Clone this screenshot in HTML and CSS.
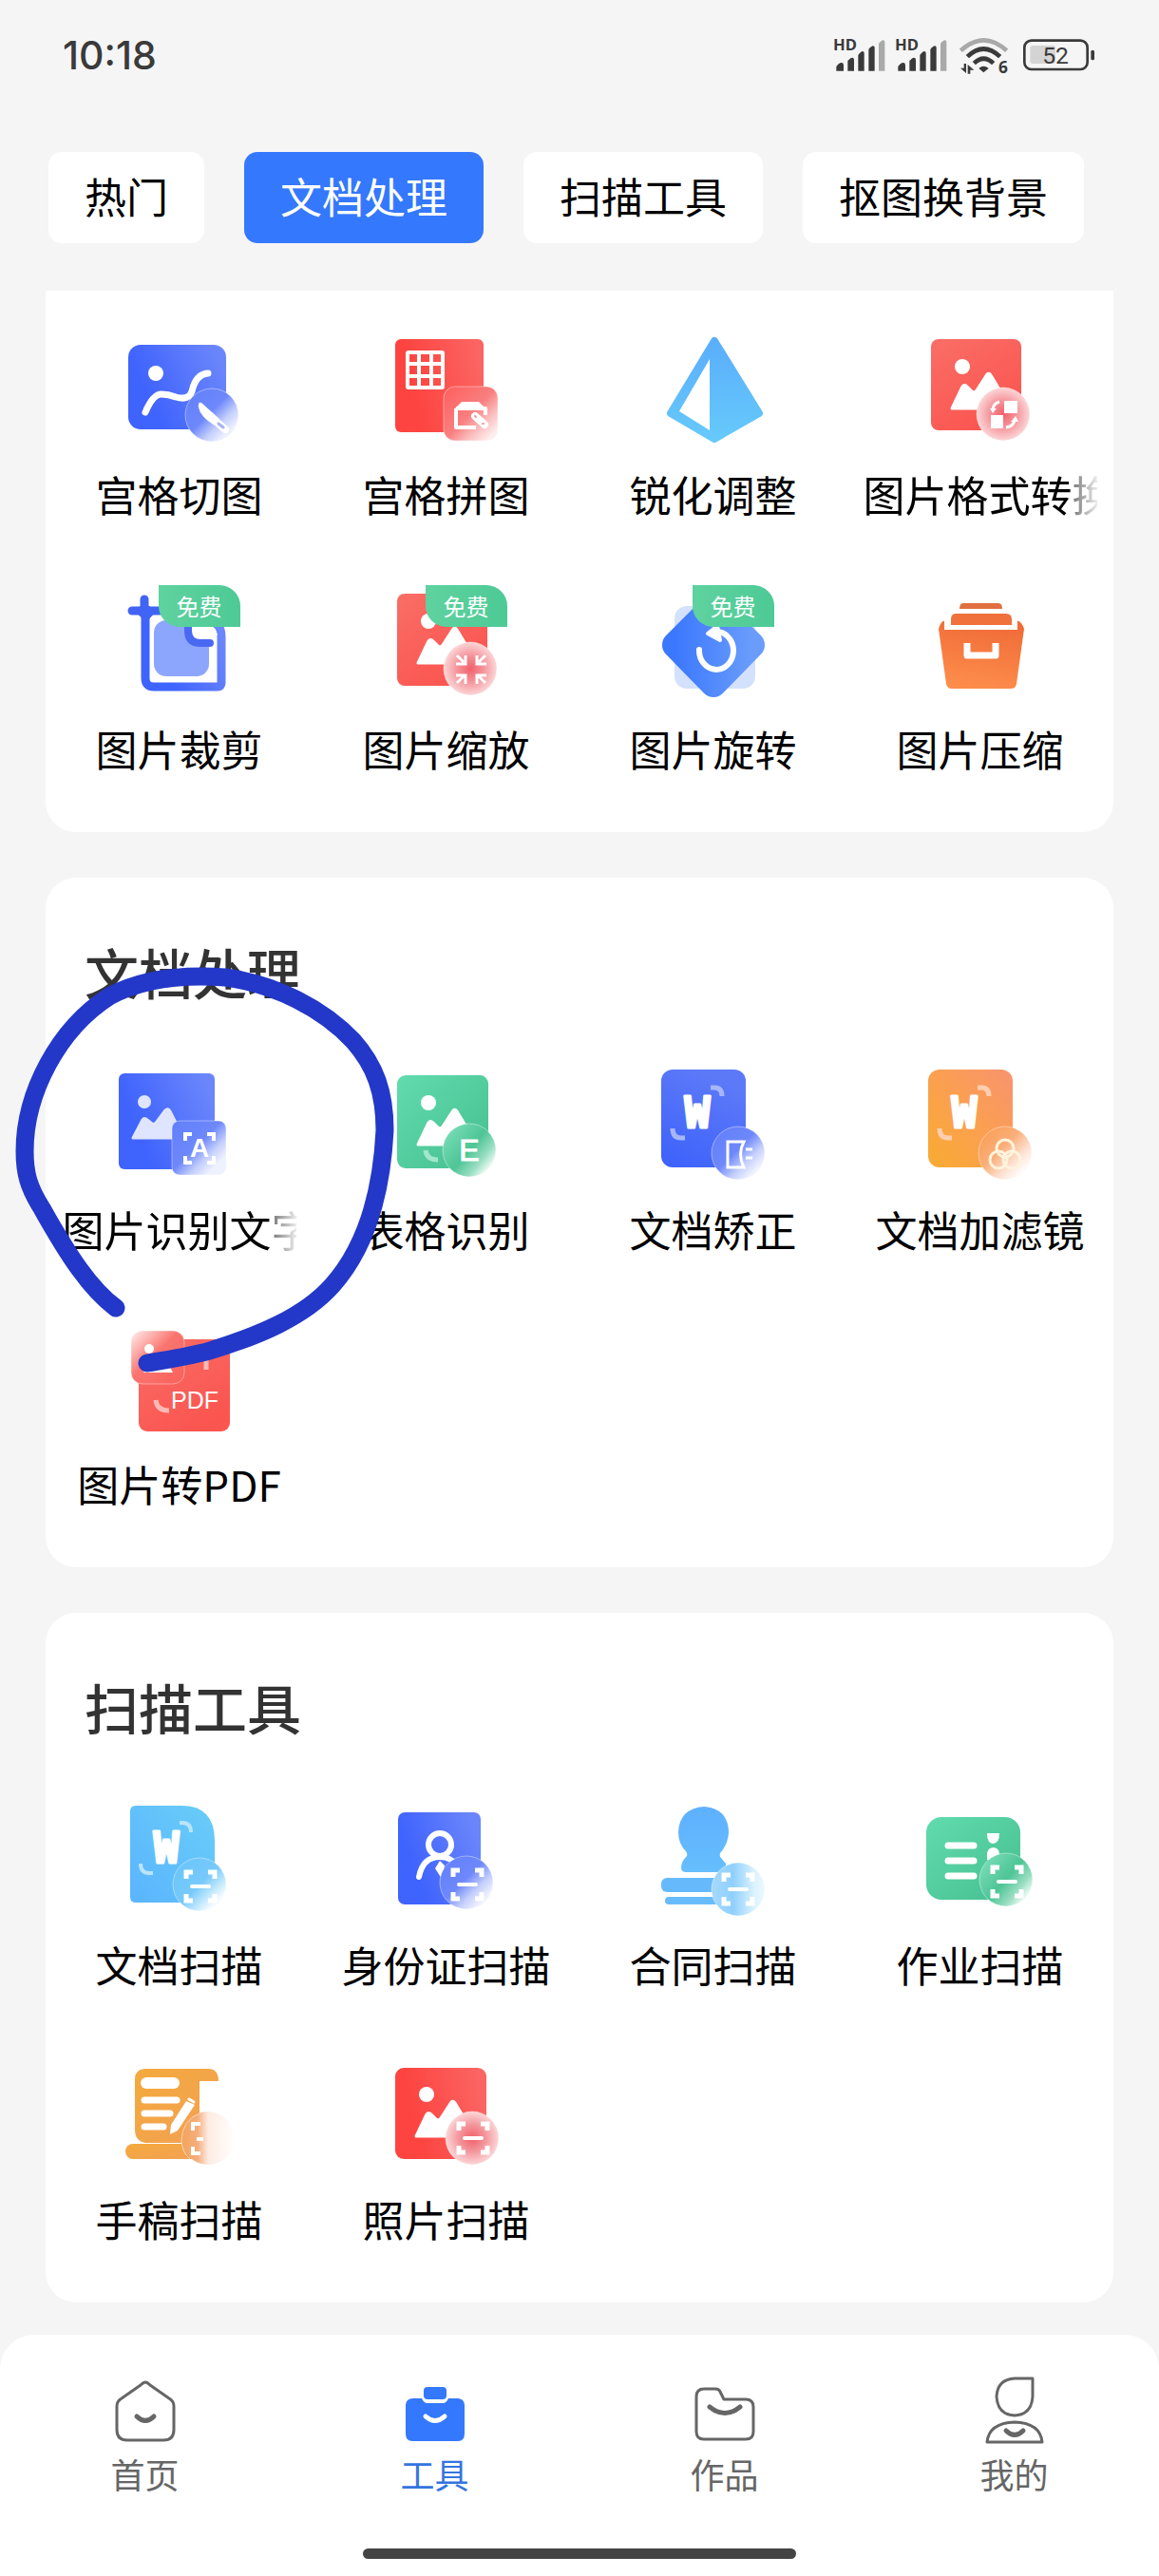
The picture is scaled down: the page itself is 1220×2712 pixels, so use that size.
FILE: index.html
```html
<!DOCTYPE html>
<html lang="zh-CN">
<head>
    <meta charset="UTF-8">
    <meta name="viewport" content="width=device-width, initial-scale=1.0">
    <title>工具</title>
    <link rel="stylesheet" href="styles.css">
</head>
<body>

<!-- shared gradients and shapes -->
<svg class="defs" aria-hidden="true">
    <defs>
        <linearGradient id="blue" x1="0" y1="0.7" x2="1" y2="0.3"><stop offset="0.2" stop-color="#3f63fd"/><stop offset="1" stop-color="#6b86fb"/></linearGradient>
        <linearGradient id="blue-down" x1="0" y1="1" x2="0.4" y2="0"><stop offset="0" stop-color="#3c61fb"/><stop offset="1" stop-color="#5c79f8"/></linearGradient>
        <linearGradient id="azure" x1="0" y1="0" x2="1" y2="0"><stop offset="0" stop-color="#3c78fd"/><stop offset="1" stop-color="#699cfb"/></linearGradient>
        <linearGradient id="red" x1="0" y1="0.6" x2="1" y2="0.4"><stop offset="0.2" stop-color="#fd4440"/><stop offset="1" stop-color="#fb6563"/></linearGradient>
        <linearGradient id="coral" x1="0" y1="0" x2="0.6" y2="1"><stop offset="0" stop-color="#f96e66"/><stop offset="1" stop-color="#fb5550"/></linearGradient>
        <linearGradient id="green" x1="0" y1="0" x2="1" y2="1"><stop offset="0" stop-color="#61dcae"/><stop offset="1" stop-color="#46be8f"/></linearGradient>
        <linearGradient id="orange" x1="0" y1="1" x2="1" y2="0"><stop offset="0" stop-color="#f8ab31"/><stop offset="0.5" stop-color="#fba050"/><stop offset="1" stop-color="#f8936e"/></linearGradient>
        <linearGradient id="amber" x1="0" y1="0" x2="1" y2="1"><stop offset="0" stop-color="#f4aa3c"/><stop offset="1" stop-color="#f2a055"/></linearGradient>
        <linearGradient id="bucket" x1="0.6" y1="0" x2="0.4" y2="1"><stop offset="0" stop-color="#f06b38"/><stop offset="1" stop-color="#fd8d4b"/></linearGradient>
        <linearGradient id="cyan" x1="0" y1="1" x2="1" y2="0"><stop offset="0" stop-color="#5bb4fe"/><stop offset="1" stop-color="#68cdf8"/></linearGradient>
        <linearGradient id="prism" x1="0" y1="0" x2="0" y2="1"><stop offset="0" stop-color="#5aaefc"/><stop offset="1" stop-color="#66c9fb"/></linearGradient>
        <linearGradient id="stamp" x1="0" y1="0" x2="0" y2="1"><stop offset="0" stop-color="#5eb0fe"/><stop offset="1" stop-color="#66befd"/></linearGradient>

        <linearGradient id="glass-blue" x1="0.1" y1="0.1" x2="0.9" y2="0.9"><stop offset="0" stop-color="#6481fb"/><stop offset="0.45" stop-color="#6e88fb"/><stop offset="0.7" stop-color="#c4cffc"/><stop offset="0.9" stop-color="#eef1fe"/></linearGradient>
        <linearGradient id="glass-red" x1="0.1" y1="0.1" x2="0.9" y2="0.9"><stop offset="0" stop-color="#fd6563"/><stop offset="0.5" stop-color="#f97f80"/><stop offset="0.75" stop-color="#fbbcbd"/><stop offset="1" stop-color="#feeeee"/></linearGradient>
        <radialGradient id="glass-rose" cx="0.5" cy="0.5" r="0.5"><stop offset="0" stop-color="#f1606b"/><stop offset="0.5" stop-color="#f4959c"/><stop offset="1" stop-color="#fcd6d7"/></radialGradient>
        <linearGradient id="glass-corner" x1="1" y1="1" x2="0" y2="0"><stop offset="0" stop-color="#fb5f5a"/><stop offset="0.55" stop-color="#fa7570"/><stop offset="1" stop-color="#fff1f0"/></linearGradient>
        <linearGradient id="glass-green" x1="0.1" y1="0.2" x2="0.95" y2="0.9"><stop offset="0" stop-color="#74dab3"/><stop offset="0.45" stop-color="#4ec596"/><stop offset="0.72" stop-color="#99dec2"/><stop offset="0.9" stop-color="#eafaf3"/></linearGradient>
        <linearGradient id="glass-orange" x1="0.1" y1="0.1" x2="0.9" y2="0.9"><stop offset="0" stop-color="#fb9f58"/><stop offset="0.4" stop-color="#faae78"/><stop offset="0.7" stop-color="#fde0d0"/><stop offset="0.9" stop-color="#fffaf7"/></linearGradient>
        <linearGradient id="glass-cyan" x1="0.1" y1="0.1" x2="0.9" y2="0.9"><stop offset="0" stop-color="#69c6fb"/><stop offset="0.5" stop-color="#78c9fb"/><stop offset="0.75" stop-color="#c5eafd"/><stop offset="0.9" stop-color="#f3fbff"/></linearGradient>
        <linearGradient id="glass-ice" x1="0" y1="0.5" x2="1" y2="0.5"><stop offset="0" stop-color="#a5d9fd"/><stop offset="0.4" stop-color="#8fd0fd"/><stop offset="0.8" stop-color="#dbf2fd"/><stop offset="1" stop-color="#edf9fe"/></linearGradient>
        <linearGradient id="glass-fade" x1="0" y1="0.5" x2="1" y2="0.5"><stop offset="0" stop-color="#f2a45c"/><stop offset="0.3" stop-color="#f5ae7c"/><stop offset="0.5" stop-color="#fdebe2"/><stop offset="1" stop-color="#ffffff"/></linearGradient>
    </defs>

    <symbol id="photo" viewBox="0 0 144 144">
        <circle cx="53" cy="46" r="8" fill="#fff"/>
        <path d="M42 90 L53 67 Q55 64 58 67 L63 72 Q66 74 68 71 L79 54 Q81 52 83 55 L104 90 Z" fill="#fff" stroke="#fff" stroke-width="3" stroke-linejoin="round"/>
    </symbol>
    <!-- scan frame -->
    <symbol id="scan" viewBox="0 0 36 36">
        <path d="M3 10 V3 H10 M26 3 H33 V10 M33 26 V33 H26 M10 33 H3 V26" fill="none" stroke="#fff" stroke-width="5"/>
        <path d="M9 18 H27" stroke="#fff" stroke-width="4" stroke-linecap="round"/>
    </symbol>
</svg>

<header class="status-bar">
    <span class="time">10:18</span>
    <svg class="status-icons" viewBox="80 50 834 126" aria-label="信号 WiFi 电量 52">
        <g id="signal">
            <text x="83" y="99" class="hd">HD</text>
            <g fill="#3a3a3a">
                <path d="M93 163 V149 Q100 139 107 137 Q116 136 116 144 V163 Z"/>
                <path d="M129 163 V131 Q138 121 143 121 Q149 121 149 127 V163 Z"/>
                <path d="M162 163 V113 Q171 101 176 101 Q181 101 181 107 V163 Z"/>
                <path d="M195 163 V95 Q204 84 209 84 Q214 84 214 90 V163 Z"/>
            </g>
            <path d="M227 163 V77 Q236 66 241 66 Q246 66 246 72 V163 Z" fill="#a9a9a9"/>
        </g>
        <use href="#signal" x="195"/>
        <g fill="none" stroke="#3a3a3a" stroke-width="14">
            <path d="M486 99 Q558 33 631 99" stroke="#a9a9a9"/>
            <path d="M507 118 Q558 69 610 118"/>
            <path d="M528 139 Q558 109 589 139"/>
        </g>
        <path d="M543 155 Q558 141 574 155 L558 168 Z" fill="#3a3a3a"/>
        <path d="M485 154 L503 170 V140 H496 V154 Z M508 172 V143 L528 160 H516 V172 Z" fill="#3a3a3a"/>
        <text x="605" y="170" class="wifi-gen">6</text>
        <rect x="705" y="83" width="80" height="57" rx="8" fill="#d4d4d4"/>
        <rect x="687" y="67" width="199" height="91" rx="22" fill="none" stroke="#3a3a3a" stroke-width="8"/>
        <rect x="897" y="97" width="11" height="32" rx="5" fill="#3a3a3a"/>
        <text x="785" y="139" class="battery">52</text>
    </svg>
</header>

<nav class="chips">
    <button type="button" class="chip">热门</button>
    <button type="button" class="chip chip-active">文档处理</button>
    <button type="button" class="chip">扫描工具</button>
    <button type="button" class="chip">抠图换背景</button>
</nav>

<main class="sections">
    <section class="card card-cut">
        <div class="tools">
            <a href="#" class="tool">
                <svg class="tool-icon" viewBox="0 0 144 144">
                    <rect x="18" y="23" width="103" height="89" rx="13" fill="url(#blue)"/>
                    <circle cx="47" cy="53" r="8" fill="#fff"/>
                    <path d="M36 94 Q44 75 53 75 Q60 75 68 78 Q82 82 85 72 Q89 54 102 53" fill="none" stroke="#fff" stroke-width="7" stroke-linecap="round"/>
                    <circle cx="106" cy="97" r="28" fill="url(#glass-blue)" class="glass"/>
                    <path d="M95 84 L114 101 L109 108 Q94 99 92 89 Q91 83 95 84 Z" fill="#fff"/>
                    <path d="M112 105 L120 112" stroke="#fff" stroke-width="8" stroke-linecap="round"/>
                    <path d="M113 106 L118 110" stroke="#a6b4ee" stroke-width="3" stroke-linecap="round"/>
                </svg>
                <span class="tool-name">宫格切图</span>
            </a>
            <a href="#" class="tool">
                <svg class="tool-icon" viewBox="0 0 144 144">
                    <rect x="18" y="17" width="93" height="98" rx="6" fill="url(#red)"/>
                    <rect x="31" y="31" width="37" height="37" rx="1" fill="none" stroke="#fff" stroke-width="4"/>
                    <path d="M43 31 V68 M56 31 V68 M31 43 H68 M31 56 H68" stroke="#fff" stroke-width="4"/>
                    <rect x="69" y="67" width="57" height="57" rx="12" fill="url(#glass-red)" class="glass"/>
                    <path d="M82 90 H113 V97 M103 110 H82 V90" fill="none" stroke="#fff" stroke-width="4" stroke-linejoin="round"/>
                    <path d="M81 90 L88 83 H106 L113 90 Z" fill="#fff"/>
                    <path d="M102 98 L112 107" stroke="#fff" stroke-width="8" stroke-linecap="round"/>
                    <path d="M102 98 L103 99 M110 106 L111 106" stroke="#f39a9b" stroke-width="2" stroke-linecap="round"/>
                </svg>
                <span class="tool-name">宫格拼图</span>
            </a>
            <a href="#" class="tool">
                <svg class="tool-icon" viewBox="0 0 144 144">
                    <path d="M73 19 L120 95 L73 122 L27 95 Z" fill="url(#prism)" stroke="url(#prism)" stroke-width="8" stroke-linejoin="round"/>
                    <path d="M68 38 V113 L36 93 Z" fill="#fff"/>
                </svg>
                <span class="tool-name">锐化调整</span>
            </a>
            <a href="#" class="tool">
                <svg class="tool-icon" viewBox="0 0 144 144">
                    <rect x="20" y="17" width="95" height="96" rx="8" fill="url(#coral)"/>
                    <use href="#photo"/>
                    <circle cx="96" cy="96" r="28" fill="url(#glass-rose)" class="glass"/>
                    <path d="M97 82 h14 v13 h-14 Z M83 97 h13 v14 h-13 Z" fill="#fff"/>
                    <path d="M85 92 Q85 85 92 83 M99 110 Q107 109 108 102" fill="none" stroke="#fff" stroke-width="3"/>
                    <path d="M82 90 h7 l-4 5 Z M104 104 l5 -6 l3 6 Z" fill="#fff"/>
                </svg>
                <span class="tool-name tool-name-long">图片格式转换</span>
            </a>
            <a href="#" class="tool">
                <svg class="tool-icon" viewBox="0 0 144 144">
                    <rect x="45" y="45" width="58" height="59" rx="13" fill="#8ca6fd"/>
                    <path d="M36 35 V106 Q36 115 45 115 H112 Q116 115 116 111 V62 Q116 46 100 46" fill="none" stroke="url(#blue)" stroke-width="9"/>
                    <path d="M35 23 V35 H22 M35 35 H60" fill="none" stroke="#4264f5" stroke-width="9" stroke-linecap="round" stroke-linejoin="round"/>
                    <path d="M24 35 L35 27 L48 35 L37 47 Z" fill="#4264f5"/>
                    <path d="M103 46 H84 V58 Q84 69 96 69 H104 L112 60 Z" fill="#fff"/>
                    <path d="M81 46 V56 Q81 69 94 69 H104" fill="none" stroke="#4a69f2" stroke-width="8" stroke-linecap="round"/>
                </svg>
                <span class="free">免费</span>
                <span class="tool-name">图片裁剪</span>
            </a>
            <a href="#" class="tool">
                <svg class="tool-icon" viewBox="0 0 144 144">
                    <rect x="20" y="17" width="95" height="97" rx="8" fill="url(#coral)"/>
                    <use href="#photo"/>
                    <circle cx="97" cy="96" r="28" fill="url(#glass-rose)" class="glass"/>
                    <path d="M83 82 L90 89 M82 91 H92 V82 M113 82 L106 89 M104 82 V91 H114 M83 111 L90 104 M82 103 H92 V112 M113 111 L106 104 M104 112 V103 H114" fill="none" stroke="#fff" stroke-width="3"/>
                </svg>
                <span class="free">免费</span>
                <span class="tool-name">图片缩放</span>
            </a>
            <a href="#" class="tool">
                <svg class="tool-icon" viewBox="0 0 144 144">
                    <rect x="31" y="30" width="85" height="87" rx="13" fill="#d3e1fc"/>
                    <path d="M72 31 L112 71 L72 112 L32 71 Z" fill="url(#azure)" stroke="url(#azure)" stroke-width="28" stroke-linejoin="round"/>
                    <path d="M57 76 A18 20 0 1 0 77 57" fill="none" stroke="#fff" stroke-width="6" stroke-linecap="round"/>
                    <path d="M66 59 L76 51 L79 66 Z" fill="#fff" stroke="#fff" stroke-width="4" stroke-linejoin="round"/>
                </svg>
                <span class="free">免费</span>
                <span class="tool-name">图片旋转</span>
            </a>
            <a href="#" class="tool">
                <svg class="tool-icon" viewBox="0 0 144 144">
                    <path d="M54 27 H91 Q95 27 95 33 H50 Q50 27 54 27 Z" fill="#e0703f"/>
                    <path d="M28 54 Q30 46 35 45 H110 Q116 47 118 54 L110 112 Q109 117 104 117 H42 Q37 117 36 112 Z" fill="url(#bucket)"/>
                    <path d="M34 44 H111 V55 H34 Z" fill="#fff"/>
                    <path d="M46 38 H99 Q105 38 105 44 V50 H41 V44 Q41 38 46 38 Z" fill="#f1713c"/>
                    <path d="M58 69 V82 H88 V69" fill="none" stroke="#fff" stroke-width="7" stroke-linejoin="round"/>
                </svg>
                <span class="tool-name">图片压缩</span>
            </a>
        </div>
    </section>

    <section class="card">
        <h2 class="card-title">文档处理</h2>
        <div class="tools">
            <a href="#" class="tool">
                <svg class="tool-icon" viewBox="0 0 144 144">
                    <rect x="8" y="16" width="101" height="101" rx="6" fill="url(#blue)"/>
                    <circle cx="35" cy="46" r="7" fill="#dfe5fe"/>
                    <path d="M23 84 L33 65 Q35 62 38 65 L43 69 Q46 70 48 67 L57 55 Q60 52 62 56 L76 84 Z" fill="#dfe5fe" stroke="#dfe5fe" stroke-width="3" stroke-linejoin="round"/>
                    <rect x="64" y="66" width="57" height="57" rx="8" fill="url(#glass-blue)" class="glass"/>
                    <path d="M78 87 V80 H85 M101 80 H108 V87 M108 103 V110 H101 M85 110 H78 V103" fill="none" stroke="#fff" stroke-width="4"/>
                    <text x="93" y="104" class="mark mark-a">A</text>
                </svg>
                <span class="tool-name tool-name-long">图片识别文字</span>
            </a>
            <a href="#" class="tool">
                <svg class="tool-icon" viewBox="0 0 144 144">
                    <rect x="20" y="18" width="96" height="98" rx="9" fill="url(#green)"/>
                    <use href="#photo" y="1"/>
                    <path d="M50 97 Q51 107 63 107" fill="none" stroke="#a3e6cc" stroke-width="5"/>
                    <circle cx="96" cy="97" r="28" fill="url(#glass-green)" class="glass"/>
                    <text x="96" y="108" class="mark mark-e">E</text>
                </svg>
                <span class="tool-name">表格识别</span>
            </a>
            <a href="#" class="tool">
                <svg class="tool-icon" viewBox="0 0 144 144">
                    <rect x="17" y="12" width="89" height="103" rx="12" fill="url(#blue-down)"/>
                    <path d="M69 31 H73 Q81 31 81 40 M29 74 Q29 84 38 84 H42" fill="none" stroke="#a7b6fb" stroke-width="5"/>
                    <text x="55" y="73" class="mark mark-w">W</text>
                    <circle cx="98" cy="100" r="28" fill="url(#glass-blue)" class="glass"/>
                    <path d="M87 88 H104 Q97 101 104 115 H87 Z" fill="none" stroke="#fff" stroke-width="3"/>
                    <path d="M106 96 H113 M106 105 H113" stroke="#fff" stroke-width="3"/>
                </svg>
                <span class="tool-name">文档矫正</span>
            </a>
            <a href="#" class="tool">
                <svg class="tool-icon" viewBox="0 0 144 144">
                    <rect x="17" y="12" width="89" height="103" rx="12" fill="url(#orange)"/>
                    <path d="M69 31 H73 Q81 31 81 40 M29 74 Q29 84 38 84 H42" fill="none" stroke="#fdcfae" stroke-width="5"/>
                    <text x="55" y="73" class="mark mark-w">W</text>
                    <circle cx="98" cy="100" r="28" fill="url(#glass-orange)" class="glass"/>
                    <g fill="none" stroke="#fff3dc" stroke-width="3">
                        <circle cx="98" cy="95" r="9"/>
                        <circle cx="91" cy="107" r="9"/>
                        <circle cx="105" cy="107" r="9"/>
                    </g>
                </svg>
                <span class="tool-name">文档加滤镜</span>
            </a>
            <a href="#" class="tool">
                <svg class="tool-icon" viewBox="0 0 144 144">
                    <rect x="29" y="28" width="96" height="97" rx="9" fill="url(#coral)"/>
                    <path d="M100 46 V60 M47 92 Q48 103 61 103" fill="none" stroke="#fdb9b5" stroke-width="5"/>
                    <rect x="21" y="19" width="56" height="56" rx="12" fill="url(#glass-corner)" class="glass"/>
                    <circle cx="40" cy="38" r="5" fill="#fff"/>
                    <path d="M34 63 L41 52 L48 56 L56 46 L65 63 Z" fill="#fff"/>
                    <text x="88" y="101" class="mark mark-pdf">PDF</text>
                </svg>
                <span class="tool-name">图片转PDF</span>
            </a>
        </div>
        <!-- hand-drawn ring round 图片识别文字 -->
        <svg class="ring" viewBox="12 1014 420 440" aria-hidden="true">
            <path d="M122 1377 C95 1357 72 1322 44 1272 C30 1250 26 1235 26 1212 C26 1150 62 1083 115 1049 C150 1030 195 1026 237 1029 C290 1036 340 1062 372 1096 C395 1122 405 1150 405 1190 C402 1250 388 1310 350 1353 C320 1387 270 1407 221 1422 C200 1428 178 1431 155 1435"/>
        </svg>
    </section>

    <section class="card">
        <h2 class="card-title">扫描工具</h2>
        <div class="tools">
            <a href="#" class="tool">
                <svg class="tool-icon" viewBox="0 0 144 144">
                    <path d="M26 13 H74 Q109 13 109 50 V115 H26 Q20 115 20 109 V19 Q20 13 26 13 Z" fill="url(#cyan)"/>
                    <path d="M72 31 H75 Q84 31 84 41 M31 74 Q31 84 40 84 H44" fill="none" stroke="#b9e4fd" stroke-width="4"/>
                    <text x="58" y="73" class="mark mark-w">W</text>
                    <circle cx="93" cy="96" r="28" fill="url(#glass-cyan)" class="glass"/>
                    <use href="#scan" x="76" y="80" width="36" height="36"/>
                </svg>
                <span class="tool-name">文档扫描</span>
            </a>
            <a href="#" class="tool">
                <svg class="tool-icon" viewBox="0 0 144 144">
                    <rect x="21" y="20" width="87" height="97" rx="7" fill="url(#blue)"/>
                    <circle cx="65" cy="54" r="12" fill="none" stroke="#fff" stroke-width="6"/>
                    <path d="M43 88 Q47 67 65 67 Q78 67 84 78" fill="none" stroke="#fff" stroke-width="6" stroke-linecap="round"/>
                    <path d="M65 71 L70 76 L67 90 L60 79 Z" fill="#fff"/>
                    <circle cx="93" cy="94" r="28" fill="url(#glass-blue)" class="glass"/>
                    <use href="#scan" x="76" y="78" width="36" height="36"/>
                </svg>
                <span class="tool-name">身份证扫描</span>
            </a>
            <a href="#" class="tool">
                <svg class="tool-icon" viewBox="0 0 144 144">
                    <path d="M62 14 Q88 16 88 42 Q87 54 79 63 Q78 66 80 68 L85 74 V83 H43 Q38 83 38 78 Q38 72 44 66 Q45 64 43 61 Q35 53 35 41 Q36 16 62 14 Z" fill="url(#stamp)"/>
                    <rect x="17" y="89" width="92" height="15" rx="6" fill="#66bafc"/>
                    <rect x="21" y="109" width="84" height="8" rx="4" fill="#68bcfb"/>
                    <circle cx="98" cy="101" r="28" fill="url(#glass-ice)" class="glass"/>
                    <use href="#scan" x="80" y="83" width="36" height="36"/>
                </svg>
                <span class="tool-name">合同扫描</span>
            </a>
            <a href="#" class="tool">
                <svg class="tool-icon" viewBox="0 0 144 144">
                    <rect x="15" y="25" width="99" height="87" rx="16" fill="url(#green)"/>
                    <path d="M38 55 H65 M38 71 H65 M38 87 H65" stroke="#fff" stroke-width="7" stroke-linecap="round"/>
                    <path d="M79 42 H92 Q92 53 85 53 Q79 53 79 42 Z M79 70 V63 Q80 57 86 57 Q92 58 92 64 V70 Z" fill="#fff"/>
                    <circle cx="99" cy="91" r="28" fill="url(#glass-green)" class="glass"/>
                    <use href="#scan" x="82" y="75" width="36" height="36"/>
                </svg>
                <span class="tool-name">作业扫描</span>
            </a>
            <a href="#" class="tool">
                <svg class="tool-icon" viewBox="0 0 144 144">
                    <path d="M35 22 H102 Q113 22 113 35 H93 V100 H36 Q25 98 25 86 V33 Q25 23 35 22 Z" fill="url(#amber)"/>
                    <rect x="15" y="101" width="84" height="16" rx="8" fill="url(#amber)"/>
                    <path d="M37 37 H66" stroke="#fff" stroke-width="12" stroke-linecap="round"/>
                    <path d="M35 55 H69 M35 69 H62 M35 83 H55" stroke="#fff" stroke-width="7" stroke-linecap="round"/>
                    <path d="M79 56 L88 60 L70 87 L62 91 L63 81 Z" fill="#fff"/>
                    <path d="M82 54 L87 57" stroke="#fff" stroke-width="3" stroke-linecap="round"/>
                    <circle cx="102" cy="95" r="28" fill="url(#glass-fade)"/>
                    <path d="M93 69 Q75 76 74 97 Q75 111 83 117" fill="none" stroke="#fbd2ae" stroke-width="1"/>
                    <path d="M86 87 V80 H94 M94 111 H86 V104 M90 96 H97" fill="none" stroke="#fff" stroke-width="4"/>
                </svg>
                <span class="tool-name">手稿扫描</span>
            </a>
            <a href="#" class="tool">
                <svg class="tool-icon" viewBox="0 0 144 144">
                    <rect x="18" y="21" width="96" height="96" rx="9" fill="url(#red)"/>
                    <use href="#photo" x="-2" y="3"/>
                    <circle cx="99" cy="95" r="28" fill="url(#glass-rose)" class="glass"/>
                    <use href="#scan" x="82" y="77" width="36" height="36"/>
                </svg>
                <span class="tool-name">照片扫描</span>
            </a>
        </div>
    </section>
</main>

<footer class="bottom">
    <nav class="tabs">
        <a href="#" class="tab">
            <svg class="tab-icon" viewBox="0 0 72 72">
                <path d="M36 6 Q38 6 41 9 L61 23 Q66 26 66 31 V56 Q66 67 55 67 H17 Q6 67 6 56 V31 Q6 26 11 23 L31 9 Q34 6 36 6 Z" class="line"/>
                <path d="M27 42 Q36 51 45 42" class="smile"/>
            </svg>
            <span>首页</span>
        </a>
        <a href="#" class="tab tab-active">
            <svg class="tab-icon" viewBox="0 0 72 72">
                <rect x="24" y="11" width="24" height="13" rx="4" fill="#3478fd"/>
                <path d="M12 23 H22 Q24 28 28 28 H44 Q48 28 50 23 H60 Q67 24 67 30 V60 Q67 68 60 68 H12 Q5 68 5 60 V30 Q5 24 12 23 Z" fill="#3478fd"/>
                <path d="M26 42 Q36 51 46 42" fill="none" stroke="#fff" stroke-width="5" stroke-linecap="round"/>
            </svg>
            <span>工具</span>
        </a>
        <a href="#" class="tab">
            <svg class="tab-icon" viewBox="0 0 72 72">
                <path d="M14 13 H26 Q30 13 31 16 L35 24 H58 Q66 24 66 32 V58 Q66 66 58 66 H14 Q6 66 6 58 V21 Q6 13 14 13 Z" class="line"/>
                <path d="M20 32 Q36 45 52 32" class="smile"/>
            </svg>
            <span>作品</span>
        </a>
        <a href="#" class="tab">
            <svg class="tab-icon" viewBox="0 0 72 72">
                <path d="M36 2 H55 V21 Q54 40 36 41 Q18 40 17 21 Q18 3 36 2 Z" class="line"/>
                <path d="M7 69 Q9 49 36 48 Q63 49 65 69 Z" class="line"/>
                <path d="M27 57 Q36 66 45 57" class="smile"/>
            </svg>
            <span>我的</span>
        </a>
    </nav>
    <div class="home-indicator"></div>
</footer>

</body>
</html>
```

FILE: styles.css
```css
* {
    box-sizing: border-box;
}
body {
    margin: 0;
    min-height: 100vh;
    display: flex;
    flex-direction: column;
    font-family: "Noto Sans CJK SC", sans-serif;
    background: #f5f5f5;
    color: #000;
}
a {
    color: inherit;
    text-decoration: none;
}
.defs {
    position: absolute;
    width: 0;
    height: 0;
}

/* status bar */
.status-bar {
    display: flex;
    align-items: center;
    justify-content: space-between;
    height: 116px;
    padding: 0 66px;
    color: #3a3a3a;
}
.time {
    font-family: Inter, sans-serif;
    font-size: 41px;
    font-weight: 500;
}
.status-icons {
    width: 278px;
    height: 42px;
    overflow: visible;
}
.hd {
    font: 700 50px "Noto Sans", sans-serif;
    fill: #3a3a3a;
}
.wifi-gen {
    font: 700 52px "Noto Sans", sans-serif;
    fill: #3a3a3a;
}
.battery {
    font: 400 74px Roboto, sans-serif;
    fill: #3a3a3a;
    text-anchor: middle;
}

/* category chips */
.chips {
    display: flex;
    gap: 42px;
    padding: 44px 51px 50px;
}
.chip {
    height: 96px;
    padding: 0 38px 4px;
    border: none;
    border-radius: 14px;
    background: #fff;
    color: #000;
    font-family: inherit;
    font-size: 44px;
    line-height: 64px;
    white-space: nowrap;
    cursor: pointer;
}
.chip-active {
    background: #3478fd;
    color: #fff;
}

/* tool cards */
.sections {
    flex: 1;
    display: flex;
    flex-direction: column;
    gap: 48px;
    padding: 0 48px 34px;
}
.card {
    position: relative;
    padding: 62px 0 56px;
    border-radius: 32px;
    background: #fff;
}
.card-cut {
    padding-top: 34px;
    border-radius: 0 0 32px 32px;
}
.card-title {
    margin: 0 0 56px;
    padding: 0 41px;
    font-size: 57px;
    font-weight: 500;
    line-height: 72px;
    color: #333;
}
.tools {
    display: grid;
    grid-template-columns: repeat(4, 1fr);
    row-gap: 56px;
}
.tool {
    position: relative;
    display: flex;
    flex-direction: column;
    align-items: center;
    gap: 4px;
    min-width: 0;
}
.tool-icon {
    width: 144px;
    height: 144px;
}
.tool-name {
    max-width: 246px;
    overflow: hidden;
    font-size: 44px;
    line-height: 64px;
    white-space: nowrap;
}
.tool-name-long {
    -webkit-mask-image: linear-gradient(to right, #000 216px, rgba(0, 0, 0, 0.5) 222px, transparent 250px);
    mask-image: linear-gradient(to right, #000 216px, rgba(0, 0, 0, 0.5) 222px, transparent 250px);
}
.free {
    position: absolute;
    top: 8px;
    left: 50%;
    width: 86px;
    margin-left: -22px;
    border-radius: 0 22px 0 22px;
    background: linear-gradient(to right, #5fd29f, #4dca96);
    color: #fff;
    font-size: 24px;
    line-height: 44px;
    text-align: center;
}

/* round and square badges over the icons */
.glass {
    stroke: #fff;
    stroke-opacity: 0.4;
    stroke-width: 1;
}

/* letters inside the icons */
.mark {
    fill: #fff;
    text-anchor: middle;
}
.mark-w {
    font: 700 44px "DejaVu Sans Mono", monospace;
    stroke: #fff;
    stroke-width: 3;
    stroke-linejoin: round;
}
.mark-a {
    font: 700 28px "Liberation Sans", sans-serif;
}
.mark-e {
    font: 400 32px "Liberation Sans", sans-serif;
    stroke: #fff;
    stroke-width: 1;
}
.mark-pdf {
    font: 400 25px "Liberation Sans", sans-serif;
}

.ring {
    position: absolute;
    top: 90px;
    left: -36px;
    width: 420px;
    height: 440px;
    pointer-events: none;
}
.ring path {
    fill: none;
    stroke: #2338c8;
    stroke-width: 19;
    stroke-linecap: round;
}

/* bottom tab bar */
.bottom {
    padding: 44px 0 18px;
    border-radius: 36px 36px 0 0;
    background: #fff;
}
.tabs {
    display: grid;
    grid-template-columns: repeat(4, 1fr);
}
.tab {
    display: flex;
    flex-direction: column;
    align-items: center;
    gap: 4px;
    color: #666;
    font-size: 36px;
    line-height: 52px;
}
.tab-active {
    color: #3474e0;
}
.tab-icon {
    width: 72px;
    height: 72px;
}
.line {
    fill: none;
    stroke: #666;
    stroke-width: 3;
    stroke-linejoin: round;
}
.smile {
    fill: none;
    stroke: #666;
    stroke-width: 5;
    stroke-linecap: round;
}
.home-indicator {
    width: 456px;
    height: 11px;
    margin: 53px auto 0;
    border-radius: 6px;
    background: #444;
}
```
